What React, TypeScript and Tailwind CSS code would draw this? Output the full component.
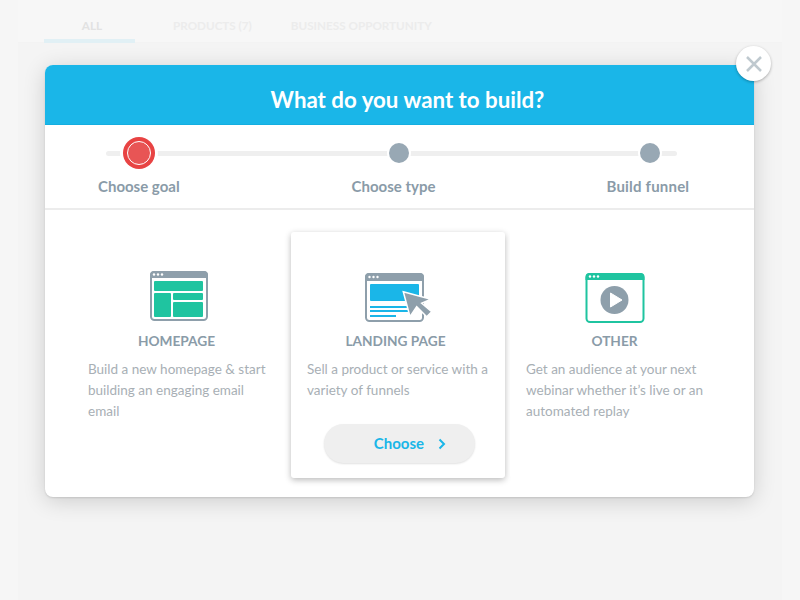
import React from "react";

const font = { fontFamily: "Lato, 'Noto Sans', sans-serif" };

function HomepageIcon() {
  return (
    <svg width="60" height="52" viewBox="0 0 60 52" fill="none">
      <rect x="2" y="2" width="56" height="48" rx="3.5" fill="#fff" stroke="#8e9fab" strokeWidth="2" />
      <path d="M1 8V5a4 4 0 0 1 4-4h50a4 4 0 0 1 4 4v3z" fill="#8e9fab" />
      <circle cx="5" cy="4.5" r="1.2" fill="#fff" />
      <circle cx="9" cy="4.5" r="1.2" fill="#fff" />
      <circle cx="13" cy="4.5" r="1.2" fill="#fff" />
      <rect x="5" y="11" width="49" height="10" rx="1" fill="#1fc4a0" />
      <rect x="5" y="23" width="17" height="24" rx="1" fill="#1fc4a0" />
      <rect x="24" y="23" width="30" height="7" rx="1" fill="#1fc4a0" />
      <rect x="24" y="32" width="30" height="15" rx="1" fill="#1fc4a0" />
    </svg>
  );
}

function LandingIcon() {
  return (
    <svg className="ml-[2px]" width="68" height="49" viewBox="0 0 68 49" fill="none">
      <rect x="1" y="1" width="57" height="47" rx="3.5" fill="#fff" stroke="#8e9fab" strokeWidth="2" />
      <path d="M0 8V4a4 4 0 0 1 4-4h51a4 4 0 0 1 4 4v4z" fill="#8e9fab" />
      <circle cx="4.5" cy="4" r="1.2" fill="#fff" />
      <circle cx="8.5" cy="4" r="1.2" fill="#fff" />
      <circle cx="12.5" cy="4" r="1.2" fill="#fff" />
      <rect x="5" y="11" width="49" height="17" rx="1" fill="#1ab6e8" />
      <rect x="5" y="33" width="39" height="2" fill="#1ab6e8" />
      <rect x="5" y="37" width="39" height="2" fill="#1ab6e8" />
      <rect x="5" y="42" width="26" height="2" fill="#1ab6e8" />
      <path
        d="M38.300 18.700L66 26.300l-9.300 4 10 8.400-5 5-10-10-6.700 10z"
        fill="#8e9fab"
        stroke="#fff"
        strokeWidth="1.500"
      />
    </svg>
  );
}

function OtherIcon() {
  return (
    <svg className="mr-[4px] -mb-[1px]" width="60" height="50" viewBox="0 0 60 50" fill="none">
      <rect x="1.500" y="1" width="57" height="48" rx="3.500" fill="#fff" stroke="#1fc4a0" strokeWidth="2" />
      <path d="M.5 7V4a4 4 0 0 1 4-4h51a4 4 0 0 1 4 4v3z" fill="#1fc4a0" />
      <circle cx="5" cy="3.500" r="1.200" fill="#fff" />
      <circle cx="9" cy="3.500" r="1.200" fill="#fff" />
      <circle cx="13" cy="3.500" r="1.200" fill="#fff" />
      <circle cx="29.500" cy="27" r="14" fill="#8e9fab" />
      <path d="M25.500 20l11.500 7-11.500 7z" fill="#fff" stroke="#fff" strokeLinejoin="round" />
    </svg>
  );
}

const cards = [
  {
    title: "HOMEPAGE",
    text: "Build a new homepage & start building an engaging email email",
    icon: <HomepageIcon />,
  },
  {
    title: "LANDING PAGE",
    text: "Sell a product or service with a variety of funnels",
    icon: <LandingIcon />,
    active: true,
  },
  {
    title: "OTHER",
    text: "Get an audience at your next webinar whether it\u2019s live or an automated replay",
    icon: <OtherIcon />,
  },
];

function Card({ title, text, icon, active }: { title: string; text: string; icon: React.ReactNode; active?: boolean }) {
  return (
    <div
      className={
        "flex h-[246px] w-[214px] flex-col rounded-[3px] bg-white pr-3 pl-4 " +
        (active ? "shadow-[0_2px_6px_rgba(0,0,0,0.28)]" : "")
      }
    >
      <div className="flex h-[90px] items-end justify-center pr-[4px]">{icon}</div>
      <h3 className="mt-[9px] pr-[9px] text-center text-[13.7px] leading-[20px] font-bold text-[#8a9ba8]">{title}</h3>
      <p className="mt-[8px] text-[13.5px] leading-[21px] text-[#a8afb5]">{text}</p>
      {active && (
        <button className="mt-auto mb-[15px] ml-[17px] flex h-[39px] w-[151px] shrink-0 items-center justify-end gap-[14px] rounded-full bg-[#efefef] pr-[29px] text-[15px] font-bold text-[#1ab6e8] shadow-[0_1px_2px_rgba(0,0,0,0.12)]">
          Choose
          <svg width="8" height="12" viewBox="0 0 8 12" fill="none">
            <path d="M1.500 1.500L6 6l-4.500 4.500" stroke="#1ab6e8" strokeWidth="2" />
          </svg>
        </button>
      )}
    </div>
  );
}

export default function App() {
  return (
    <div className="h-[600px] w-[800px] overflow-hidden bg-[#f6f6f6]" style={font}>
      <div className="mx-[18px] h-full bg-[#f4f4f4]">
        <nav className="flex h-[43px] border-b border-[#f3f3f3] bg-[#f7f7f7] pl-[26px]">
          <div className="flex h-[43px] w-[91px] justify-center border-b-4 border-[#e1f0f5] pt-[17px] pl-[5px] text-[11.7px] leading-[17px] font-bold text-[#e2e2e2]">
            ALL
          </div>
          <div className="ml-[38px] pt-[17px] text-[11.7px] leading-[17px] font-bold text-[#ececec]">PRODUCTS (7)</div>
          <div className="ml-[39px] pt-[17px] text-[11.7px] leading-[17px] font-bold text-[#ececec]">BUSINESS OPPORTUNITY</div>
        </nav>

        <div className="relative mt-[22px] ml-[27px] h-[432px] w-[709px] rounded-[8px] bg-white shadow-[0_4px_22px_rgba(0,0,0,0.16),0_1px_2px_rgba(0,0,0,0.12)]">
          <button className="absolute -top-[19px] -right-[17px] flex h-[35px] w-[35px] items-center justify-center rounded-full bg-white shadow-[0_1px_3px_rgba(0,0,0,0.3)]">
            <svg width="18" height="18" viewBox="0 0 18 18" fill="none">
              <path d="M2 2l14 14M16 2L2 16" stroke="#bfc9cf" strokeWidth="2.500" />
            </svg>
          </button>

          <header className="flex h-[60px] items-center justify-center rounded-t-[8px] border-b border-[#14aee0] bg-[#1ab6e8] pt-[10px] pl-[16px] text-[22.3px] font-bold text-white">
            What do you want to build?
          </header>

          <div className="h-[85px] border-b-2 border-[#ececec] pt-[13px]">
            <div className="relative mr-[77px] ml-[61px] h-[30px]">
              <div className="absolute top-[13px] right-0 left-0 h-[5px] rounded-full bg-[#efefef]" />
              <span className="absolute -top-px left-[17px] flex h-[32px] w-[32px] items-center justify-center rounded-full bg-[#e84343] ring-[3px] ring-white">
                <span className="h-[24px] w-[24px] rounded-full border border-white bg-[#e85555]" />
              </span>
              <span className="absolute top-[5px] left-[283px] h-[20px] w-[20px] rounded-full bg-[#98a8b4] ring-[2px] ring-white" />
              <span className="absolute top-[5px] left-[534px] h-[20px] w-[20px] rounded-full bg-[#98a8b4] ring-[2px] ring-white" />
            </div>
            <div className="mt-[8px] flex pl-[53px] text-[15px] leading-[20px] font-bold text-[#8a9ba8]">
              <span>Choose goal</span>
              <span className="ml-[172px]">Choose type</span>
              <span className="ml-[171px] tracking-[0.2px]">Build funnel</span>
            </div>
          </div>

          <div className="flex gap-[5px] pt-[22px] pl-[27px]">
            {cards.map((card) => (
              <Card key={card.title} {...card} />
            ))}
          </div>
        </div>
      </div>
    </div>
  );
}
